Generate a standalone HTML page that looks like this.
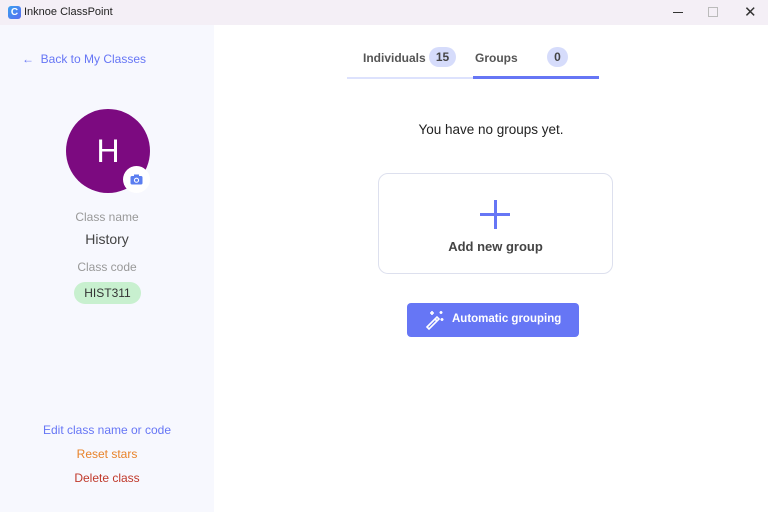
<!DOCTYPE html>
<html><head><style>
*{margin:0;padding:0;box-sizing:border-box}
body{width:768px;height:512px;overflow:hidden;font-family:"Liberation Sans",sans-serif;background:#fff;position:relative}
.tb{position:absolute;left:0;top:0;width:768px;height:25px;background:#f4eff6;font-size:11px;color:#222}
.side{position:absolute;left:0;top:25px;width:214px;height:487px;background:#f7f8fe}
.a{position:absolute}
.c{text-align:center;left:0;width:214px}
</style></head><body>
<div class="tb">
 <div class="a" style="left:8px;top:6px;width:13px;height:13px;border-radius:3px;background:linear-gradient(135deg,#3aa0f0,#5a6cf0);color:#fff;font-size:10px;font-weight:bold;text-align:center;line-height:13px">C</div>
 <div class="a" style="left:24px;top:6px">Inknoe ClassPoint</div>
 <div class="a" style="left:673px;top:12px;width:10px;height:1px;background:#333"></div>
 <div class="a" style="left:708px;top:7px;width:10px;height:10px;border:1px solid #bbb"></div>
 <div class="a" style="left:744px;top:3px;font-size:15px;color:#333">✕</div>
</div>
<div class="side">
 <div class="a" style="left:22px;top:27px;color:#6676f5;font-size:12px">←&nbsp;&nbsp;Back to My Classes</div>
 <div class="a" style="left:66px;top:84px;width:84px;height:84px;border-radius:50%;background:#7c0a80;color:#fff;font-size:32px;text-align:center;line-height:84px">H</div>
 <div class="a" style="left:123px;top:141px;width:27px;height:27px;border-radius:50%;background:#fff"></div>
 <svg class="a" style="left:129px;top:147px" width="15" height="15" viewBox="0 0 15 15"><rect x="1.5" y="4" width="12" height="8.5" rx="1.5" fill="#5b7ef0"/><rect x="5" y="2.5" width="5" height="2" fill="#5b7ef0"/><circle cx="7.5" cy="8.2" r="2.6" fill="#fff"/><circle cx="7.5" cy="8.2" r="1.5" fill="#5b7ef0"/></svg>
 <div class="a c" style="top:185px;font-size:12px;color:#999">Class name</div>
 <div class="a c" style="top:206px;font-size:14px;color:#444">History</div>
 <div class="a c" style="top:235px;font-size:12px;color:#999">Class code</div>
 <div class="a" style="left:74px;top:257px;width:67px;height:22px;border-radius:11px;background:#c8f0cf;color:#333;font-size:12px;text-align:center;line-height:22px">HIST311</div>
 <div class="a c" style="top:398px;font-size:12px;color:#6676f5">Edit class name or code</div>
 <div class="a c" style="top:422px;font-size:12px;color:#e8832a">Reset stars</div>
 <div class="a c" style="top:446px;font-size:12px;color:#c0392b">Delete class</div>
</div>
<div class="a" style="left:363px;top:51px;font-size:12px;font-weight:bold;color:#555">Individuals</div>
<div class="a" style="left:429px;top:47px;width:27px;height:20px;border-radius:10px;background:#d6dcfb;font-size:12px;font-weight:bold;color:#444;text-align:center;line-height:20px">15</div>
<div class="a" style="left:475px;top:51px;font-size:12px;font-weight:bold;color:#555">Groups</div>
<div class="a" style="left:547px;top:47px;width:21px;height:20px;border-radius:10px;background:#d6dcfb;font-size:12px;font-weight:bold;color:#444;text-align:center;line-height:20px">0</div>
<div class="a" style="left:347px;top:77px;width:126px;height:2px;background:#dde2fd"></div>
<div class="a" style="left:473px;top:76px;width:126px;height:3px;background:#6676f5"></div>
<div class="a" style="left:214px;width:554px;top:122px;text-align:center;font-size:13.5px;color:#222">You have no groups yet.</div>
<div class="a" style="left:378px;top:173px;width:235px;height:101px;border:1px solid #dde0ee;border-radius:10px"></div>
<div class="a" style="left:480px;top:213px;width:30px;height:3px;background:#6676f5"></div>
<div class="a" style="left:494px;top:200px;width:3px;height:29px;background:#6676f5"></div>
<div class="a" style="left:378px;width:235px;top:239px;text-align:center;font-size:13px;font-weight:bold;color:#444">Add new group</div>
<div class="a" style="left:407px;top:303px;width:172px;height:34px;border-radius:4px;background:#6676f5"></div>
<svg class="a" style="left:424px;top:309px" width="22" height="22" viewBox="0 0 22 22" fill="none" stroke="#fff" stroke-width="1.6"><path d="M3 18l10-10 2 2-10 10z"/><path d="M11 10l2 2"/><path d="M8 2v4M6 4h4M17 2v3M15.5 3.5h3M18 9v3M16.5 10.5h3"/></svg>
<div class="a" style="left:452px;top:313px;font-size:11.5px;font-weight:bold;color:#fff">Automatic grouping</div>
</body></html>
